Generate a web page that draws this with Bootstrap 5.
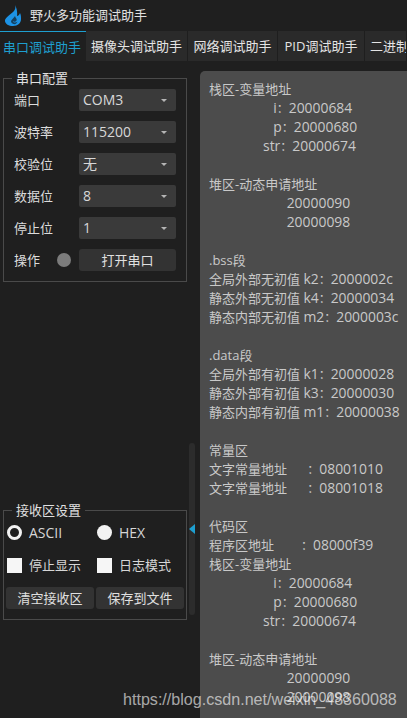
<!DOCTYPE html>
<html lang="zh">
<head>
<meta charset="utf-8">
<title>野火多功能调试助手</title>
<link href="https://cdn.jsdelivr.net/npm/bootstrap@5.3.0/dist/css/bootstrap.min.css" rel="stylesheet">
<style>
html,body{height:100%;overflow:hidden}
body{background:#1f1f1f;color:#d6d6d6;font-family:"Open Sans","Noto Sans CJK SC",sans-serif;font-size:13px;line-height:19px;position:relative}
.app-shell{height:718px;width:407px;overflow:hidden}
.title-bar{height:31px;padding-left:5px;gap:8px;font-size:13px;color:#e0e0e0}
.tab-strip{height:30px;flex-wrap:nowrap;overflow:hidden;background:#1b1b1b}
.tab-item{height:30px;background:#2a2a2a;border-right:1px solid #1e1e1e;color:#e4e4e4;font-size:13px;white-space:nowrap;text-align:center;line-height:31px;flex:none}
.tab-item.on{background:#1f1f1f;color:#1e9fd0;border-top:1px solid #1e9fd0;border-right:0;width:86px;text-align:left;padding-left:3px;line-height:30px}
.tw-a{width:102px}.tw-b{width:90px}.tw-c{width:87px}.tw-d{width:42px;padding-left:5px;text-align:left;overflow:hidden}
.left-col{width:200px;flex:none;padding:17px 0 0 3px;height:657px}
.group-box{width:184px;border:1px solid #4a4a4a;position:relative}
.group-legend{position:absolute;top:-10px;left:8px;padding:0 4px;background:#1f1f1f;font-size:13px;color:#e0e0e0;line-height:19px}
.cfg-box{height:204px;padding:10px 10px 0 10px;gap:10px}
.cfg-row{height:22px;align-items:center}
.cfg-label{width:65px;flex:none;color:#dcdcdc}
.cfg-select{width:97px;height:22px;background:#3a3a3a;color:#d8d8d8;padding:0 4px;line-height:22px;font-size:14px;border-radius:2px;flex:none}
.cfg-caret{width:0;height:0;border-left:3px solid transparent;border-right:3px solid transparent;border-top:3px solid #b5b5b5;margin-right:5px}
.led-dot{width:14px;height:14px;border-radius:50%;background:#7c7c7c;margin-left:-22px;margin-right:8px;flex:none}
.dark-btn{background:#333;color:#e0e0e0;border-radius:3px;text-align:center;font-size:13px;height:22px;line-height:22px;flex:none}
.cfg-btn{width:97px}
.recv-wrap{margin-top:228px}
.recv-box{height:110px;padding:11px 3px 0 3px}
.radio-on{width:15px;height:15px;border-radius:50%;background:#1f1f1f;border:3px solid #f2f2f2;flex:none}
.radio-off{width:15px;height:15px;border-radius:50%;background:#f2f2f2;flex:none}
.check-off{width:15px;height:15px;background:#f6f6f6;flex:none}
.recv-cell{width:90px;gap:7px;align-items:center;height:20px;flex:none}
.recv-row{margin-bottom:13px}
.latin-label{font-size:14px}
.gap-btn{gap:2px;margin:-1px 0 0 -1px}
.recv-btn{width:88px;height:22px}
.scroll-rail{position:absolute;left:189px;top:443px;width:6px;height:172px;background:#2c2c2c;border-radius:3px}
.scroll-arrow{position:absolute;left:189px;top:524px;width:0;height:0;border-top:5px solid transparent;border-bottom:5px solid transparent;border-right:6px solid #1e9fd0}
.log-pane{width:207px;background:#4c4c4c;color:#c9c9c9;margin:10px 0 0 0;padding:9px 0 0 9px;border-radius:5px 0 0 0;height:647px;overflow:hidden;white-space:pre;font-size:13px;line-height:19px}
.addr{font-family:"Open Sans","Noto Sans CJK TC",sans-serif;font-size:13.9px;line-height:0}
.addr b{font-weight:400;font-size:12px}
.wm-text{position:absolute;left:123px;top:689px;font-family:"Liberation Sans",sans-serif;font-size:16.1px;line-height:20px;color:rgba(255,255,255,.62);white-space:nowrap}
</style>
</head>
<body>
<div class="app-shell d-flex flex-column">
  <div class="title-bar d-flex align-items-center">
    <svg width="17" height="21" viewBox="0 0 17 21" aria-hidden="true"><path fill="#1d93e6" d="M10 0c1 3 0 5-2 7-3 3-7 5-8 8-.5 3 3 6 8 6 5 0 8-3 8-7 0-2 0-4-1-6-.5 2-2 3-3 3 .5-4-.2-8-2-11z"/><path fill="#14405f" d="M6 16c1-2 3-3 4-5 .5 1.500 1 2 1.500 3 .5 1 0 2-1 2.500-1 .5-2 .2-2.500-.5 0 1.500 2.500 2.500 4.500 .5-.5 2-2.500 3-4 2.500-1.500-.3-2.500-1.500-2.500-3z"/></svg>
    <span>野火多功能调试助手</span>
  </div>
  <div class="tab-strip d-flex">
    <div class="tab-item on">串口调试助手</div>
    <div class="tab-item tw-a">摄像头调试助手</div>
    <div class="tab-item tw-b">网络调试助手</div>
    <div class="tab-item tw-c">PID调试助手</div>
    <div class="tab-item tw-d">二进制</div>
  </div>
  <div class="d-flex flex-grow-1">
    <div class="left-col">
      <div class="group-box cfg-box d-flex flex-column">
        <div class="group-legend">串口配置</div>
        <div class="d-flex cfg-row"><span class="cfg-label">端口</span><div class="cfg-select d-flex justify-content-between align-items-center"><span>COM3</span><i class="cfg-caret"></i></div></div>
        <div class="d-flex cfg-row"><span class="cfg-label">波特率</span><div class="cfg-select d-flex justify-content-between align-items-center"><span>115200</span><i class="cfg-caret"></i></div></div>
        <div class="d-flex cfg-row"><span class="cfg-label">校验位</span><div class="cfg-select d-flex justify-content-between align-items-center"><span>无</span><i class="cfg-caret"></i></div></div>
        <div class="d-flex cfg-row"><span class="cfg-label">数据位</span><div class="cfg-select d-flex justify-content-between align-items-center"><span>8</span><i class="cfg-caret"></i></div></div>
        <div class="d-flex cfg-row"><span class="cfg-label">停止位</span><div class="cfg-select d-flex justify-content-between align-items-center"><span>1</span><i class="cfg-caret"></i></div></div>
        <div class="d-flex cfg-row"><span class="cfg-label">操作</span><i class="led-dot"></i><div class="dark-btn cfg-btn">打开串口</div></div>
      </div>
      <div class="recv-wrap">
        <div class="group-box recv-box">
          <div class="group-legend">接收区设置</div>
          <div class="d-flex recv-row">
            <div class="d-flex recv-cell"><i class="radio-on"></i><span class="latin-label">ASCII</span></div>
            <div class="d-flex recv-cell"><i class="radio-off"></i><span class="latin-label">HEX</span></div>
          </div>
          <div class="d-flex recv-row">
            <div class="d-flex recv-cell"><i class="check-off"></i><span>停止显示</span></div>
            <div class="d-flex recv-cell"><i class="check-off"></i><span>日志模式</span></div>
          </div>
          <div class="d-flex gap-btn">
            <div class="dark-btn recv-btn">清空接收区</div>
            <div class="dark-btn recv-btn">保存到文件</div>
          </div>
        </div>
      </div>
    </div>
    <div class="log-pane">栈区-变量地址
                   <span class="addr">i<b>：</b>20000684</span>
                   <span class="addr">p<b>：</b>20000680</span>
                <span class="addr">str<b>：</b>20000674</span>

堆区-动态申请地址
                       <span class="addr">20000090</span>
                       <span class="addr">20000098</span>

.bss段
全局外部无初值 <span class="addr">k2<b>：</b>2000002c</span>
静态外部无初值 <span class="addr">k4<b>：</b>20000034</span>
静态内部无初值 <span class="addr">m2<b>：</b>2000003c</span>

.data段
全局外部有初值 <span class="addr">k1<b>：</b>20000028</span>
静态外部有初值 <span class="addr">k3<b>：</b>20000030</span>
静态内部有初值 <span class="addr">m1<b>：</b>20000038</span>

常量区
文字常量地址      <span class="addr"><b>：</b>08001010</span>
文字常量地址      <span class="addr"><b>：</b>08001018</span>

代码区
程序区地址        <span class="addr"><b>：</b>08000f39</span>
栈区-变量地址
                   <span class="addr">i<b>：</b>20000684</span>
                   <span class="addr">p<b>：</b>20000680</span>
                <span class="addr">str<b>：</b>20000674</span>

堆区-动态申请地址
                       <span class="addr">20000090</span>
                       <span class="addr">20000098</span></div>
  </div>
</div>
<div class="scroll-rail"></div>
<div class="scroll-arrow"></div>
<div class="wm-text">https://blog.csdn.net/weixin_48360088</div>
<script src="https://cdn.jsdelivr.net/npm/bootstrap@5.3.0/dist/js/bootstrap.bundle.min.js"></script>
</body>
</html>
